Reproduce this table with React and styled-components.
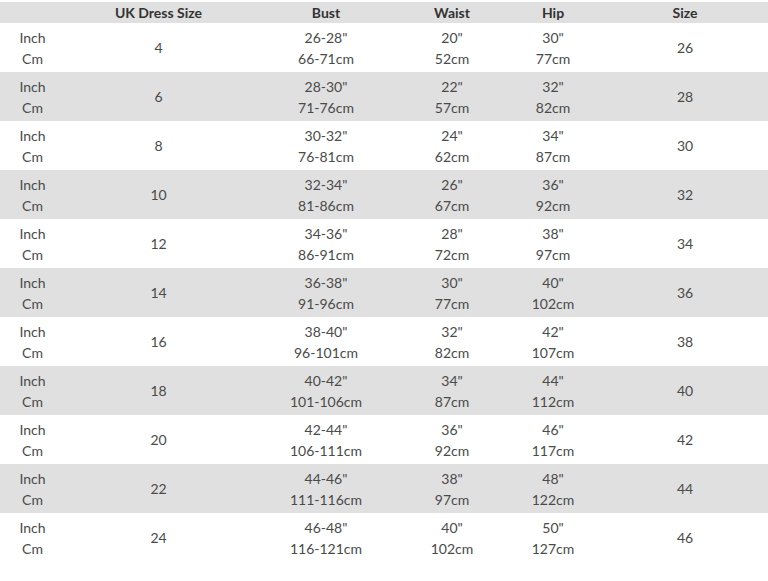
import React from "react";
import styled, { createGlobalStyle } from "styled-components";

const GlobalStyle = createGlobalStyle`
  body {
    margin: 0;
    background: #ffffff;
    font-family: "Lato", "Liberation Sans", sans-serif;
  }
`;

const columns = "65px 187px 148px 104px 98px 166px";

const Table = styled.div`
  width: 768px;
  padding-top: 2px;
`;

const HeaderRow = styled.div`
  display: grid;
  grid-template-columns: ${columns};
  height: 21px;
  align-items: center;
  background: #e0e0e0;
`;

const HeadCell = styled.div`
  text-align: center;
  font-size: 14px;
  font-weight: 700;
  color: #333333;
`;

const Row = styled.div`
  display: grid;
  grid-template-columns: ${columns};
  height: 49px;
  align-items: center;
  background: ${(p) => (p.$shaded ? "#e0e0e0" : "#ffffff")};
`;

const Cell = styled.div`
  display: flex;
  flex-direction: column;
  align-items: center;
  font-size: 14px;
  line-height: 21px;
  color: #4a4a4a;
`;

const rows = [
  ["4", "26-28\"", "66-71cm", "20\"", "52cm", "30\"", "77cm", "26"],
  ["6", "28-30\"", "71-76cm", "22\"", "57cm", "32\"", "82cm", "28"],
  ["8", "30-32\"", "76-81cm", "24\"", "62cm", "34\"", "87cm", "30"],
  ["10", "32-34\"", "81-86cm", "26\"", "67cm", "36\"", "92cm", "32"],
  ["12", "34-36\"", "86-91cm", "28\"", "72cm", "38\"", "97cm", "34"],
  ["14", "36-38\"", "91-96cm", "30\"", "77cm", "40\"", "102cm", "36"],
  ["16", "38-40\"", "96-101cm", "32\"", "82cm", "42\"", "107cm", "38"],
  ["18", "40-42\"", "101-106cm", "34\"", "87cm", "44\"", "112cm", "40"],
  ["20", "42-44\"", "106-111cm", "36\"", "92cm", "46\"", "117cm", "42"],
  ["22", "44-46\"", "111-116cm", "38\"", "97cm", "48\"", "122cm", "44"],
  ["24", "46-48\"", "116-121cm", "40\"", "102cm", "50\"", "127cm", "46"],
];

export default function App() {
  return (
    <>
      <GlobalStyle />
      <Table>
        <HeaderRow>
          <HeadCell></HeadCell>
          <HeadCell>UK Dress Size</HeadCell>
          <HeadCell>Bust</HeadCell>
          <HeadCell>Waist</HeadCell>
          <HeadCell>Hip</HeadCell>
          <HeadCell>Size</HeadCell>
        </HeaderRow>
        {rows.map((r, i) => (
          <Row key={r[0]} $shaded={i % 2 === 1}>
            <Cell>
              <span>Inch</span>
              <span>Cm</span>
            </Cell>
            <Cell>{r[0]}</Cell>
            <Cell>
              <span>{r[1]}</span>
              <span>{r[2]}</span>
            </Cell>
            <Cell>
              <span>{r[3]}</span>
              <span>{r[4]}</span>
            </Cell>
            <Cell>
              <span>{r[5]}</span>
              <span>{r[6]}</span>
            </Cell>
            <Cell>{r[7]}</Cell>
          </Row>
        ))}
      </Table>
    </>
  );
}
